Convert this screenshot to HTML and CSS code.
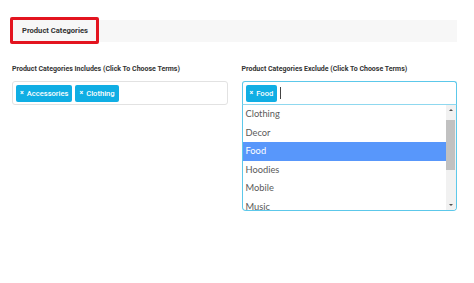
FILE: index.html
```html
<!DOCTYPE html>
<html>
<head>
<meta charset="utf-8">
<link rel="stylesheet" href="styles.css">
</head>
<body>
<div class="page">
  <div class="header">
    <div class="title">Product Categories</div>
  </div>
  <div class="cols">
    <div class="col">
      <div class="label">Product Categories Includes (Click To Choose Terms)</div>
      <div class="select">
        <span class="tag"><span class="x">×</span>Accessories</span>
        <span class="tag"><span class="x">×</span>Clothing</span>
      </div>
    </div>
    <div class="col">
      <div class="label">Product Categories Exclude (Click To Choose Terms)</div>
      <div class="select focused">
        <span class="tag"><span class="x">×</span>Food</span>
        <span class="caret"></span>
      </div>
      <div class="dropdown">
        <ul class="options">
          <li>Clothing</li>
          <li>Decor</li>
          <li class="hl">Food</li>
          <li>Hoodies</li>
          <li>Mobile</li>
          <li>Music</li>
        </ul>
        <div class="scrollbar">
          <div class="arrow up"></div>
          <div class="track"><div class="thumb"></div></div>
          <div class="arrow down"></div>
        </div>
      </div>
    </div>
  </div>
</div>
</body>
</html>
```
FILE: styles.css
```css
html, body { margin: 0; padding: 0; background: #fff; }
body { font-family: Roboto, "Liberation Sans", sans-serif; width: 474px; height: 283px; overflow: hidden; }
.page { padding: 20px 17px 0 10px; }
.header { background: #f7f7f7; height: 22px; display: flex; align-items: center; }
.title {
  box-sizing: border-box;
  height: 27px;
  margin: 0;
  padding: 0 8px 0 9px;
  border: 3px solid #e3141f;
  border-radius: 2px;
  display: flex; align-items: center;
  font-size: 7.6px; font-weight: 700; color: #333;
  margin-top: -1px;
}
.cols { display: flex; gap: 14px; padding: 22px 0 0 2px; }
.col { flex: 1; display: flex; flex-direction: column; }
.label { font-size: 7px; font-weight: 700; color: #333; height: 10px; line-height: 10px; margin-bottom: 7px; }
.select {
  box-sizing: border-box; height: 24px;
  border: 1px solid #e2e2e2; border-radius: 3px;
  display: flex; align-items: center; gap: 3px; padding: 0 3px;
}
.select.focused { border: 1.5px solid #5cc8ea; border-bottom: 1px solid #8fd8ef; border-radius: 3px 3px 0 0; }
.tag {
  background: #10aee4; color: #fff; border-radius: 2px;
  height: 17px; display: flex; align-items: center; padding: 0 4px 0 4px;
  font-size: 7.6px; font-weight: 500;
}
.tag .x { font-size: 7px; margin-right: 3px; font-weight: 700; }
.caret { width: 1px; height: 12px; background: #444; margin-left: 0; }
.dropdown {
  box-sizing: border-box; height: 106px;
  border: 1.5px solid #5cc8ea; border-top: none; border-radius: 0 0 4px 4px;
  display: flex; overflow: hidden;
}
.options { list-style: none; margin: 0; padding: 0; flex: 1; font-family: Lato, "Open Sans", sans-serif; }
.options li { height: 18.6px; line-height: 18.6px; padding-left: 3px; font-size: 9.3px; color: #5a5a5a; }
.options li.hl { background: #5897fb; color: #fff; }
.scrollbar { width: 10px; display: flex; flex-direction: column; background: #f1f1f1; }
.arrow { height: 14px; position: relative; }
.arrow.up::after { content: ""; position: absolute; left: 3px; top: 4px; border: 2px solid transparent; border-bottom: 2.5px solid #505050; border-top: none; }
.arrow.down::after { content: ""; position: absolute; left: 3px; bottom: 4px; border: 2px solid transparent; border-top: 2.5px solid #505050; border-bottom: none; }
.track { flex: 1; }
.thumb { margin: 1px 1px 0 0; height: 50px; background: #c1c1c1; }
```
